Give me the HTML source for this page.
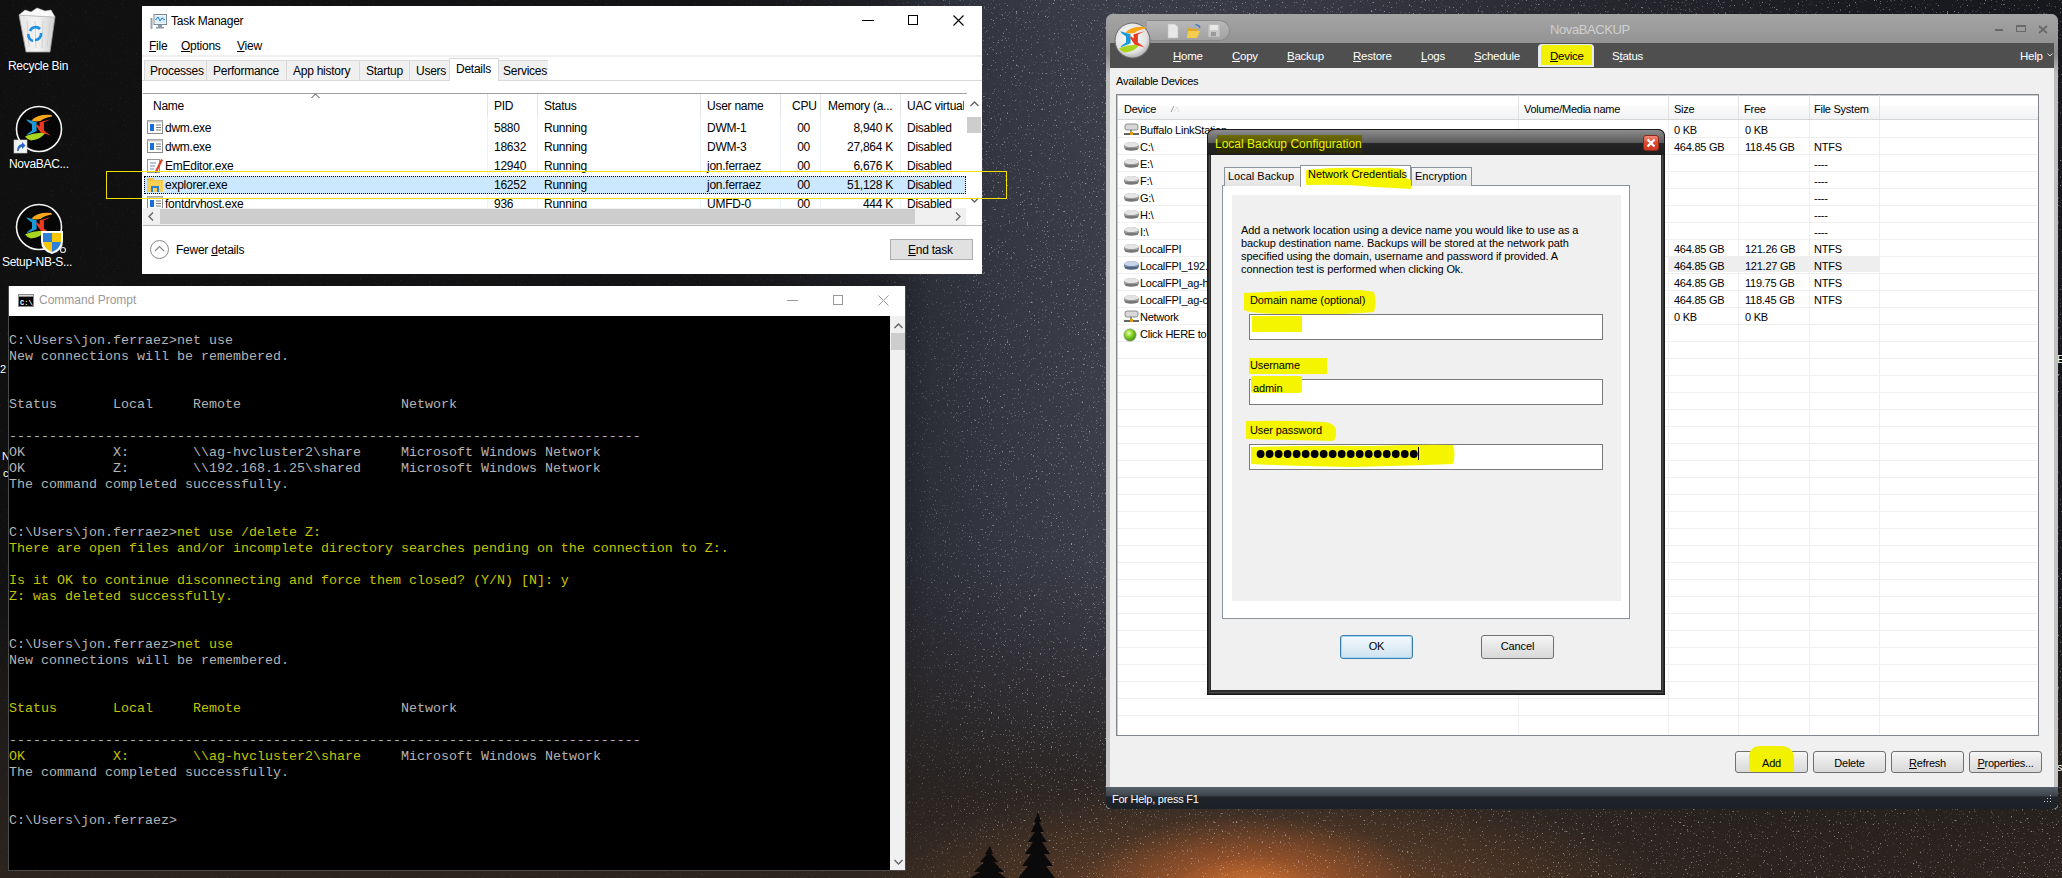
<!DOCTYPE html>
<html><head><meta charset="utf-8">
<style>
*{margin:0;padding:0;box-sizing:border-box}
html,body{width:2062px;height:878px;overflow:hidden}
body{position:relative;font-family:"Liberation Sans",sans-serif;background:#111113;
background:
 radial-gradient(ellipse 170px 75px at 1250px 890px, rgba(230,125,50,.85), rgba(200,100,45,.45) 45%, rgba(150,80,40,0) 100%),
 radial-gradient(ellipse 520px 150px at 1260px 900px, rgba(140,80,42,.9), rgba(100,65,40,.55) 45%, rgba(60,45,38,.15) 80%, rgba(40,34,32,0) 100%),
 linear-gradient(180deg, rgba(34,30,28,0) 0px, rgba(34,30,28,0) 560px, rgba(40,34,30,.85) 790px, rgba(44,36,30,1) 878px),
 linear-gradient(90deg,#101011 0px,#131315 700px,#1e1f24 880px,#2c2e38 930px,#343642 1000px,#3b3d49 1100px,#353641 1350px,#26262d 1600px,#1a1b20 1850px,#16181c 2062px);
}
.abs{position:absolute}
.ls{font-family:"Liberation Sans",sans-serif}
.lm{font-family:"Liberation Mono",monospace}
.t{position:absolute;white-space:pre;line-height:1}
/* desktop icon labels */
.tab{background:#f0f0f0;border:1px solid #d9d9d9;border-right:none}
.cl{position:absolute;left:0px;white-space:pre;height:16px}
.nbtn{background:linear-gradient(#f6f6f6,#e6e6e6 50%,#d9d9d9);border:1px solid #707070;border-radius:3px}
.ps{letter-spacing:-0.1px}
#nova .t{letter-spacing:-0.25px}
.dlab{position:absolute;color:#fff;font-size:12px;white-space:pre;text-shadow:0 0 2px #000;letter-spacing:-0.3px;line-height:1}
</style></head><body>

<svg class="abs" style="left:0;top:0;opacity:.5" width="2062" height="878">
 <defs>
  <filter id="nz" x="0" y="0" width="100%" height="100%"><feTurbulence type="fractalNoise" baseFrequency="0.55" numOctaves="2" seed="7"/><feColorMatrix values="0 0 0 0 .8  0 0 0 0 .8  0 0 0 0 .9  6 0 0 0 -3.95"/><feGaussianBlur stdDeviation="0.45"/></filter>
  <linearGradient id="nzm" x1="0" x2="1"><stop offset="0" stop-color="#fff" stop-opacity=".12"/><stop offset=".42" stop-color="#fff" stop-opacity=".18"/><stop offset=".48" stop-color="#fff" stop-opacity="1"/><stop offset="1" stop-color="#fff" stop-opacity="1"/></linearGradient>
  <mask id="nzk"><rect width="2062" height="878" fill="url(#nzm)"/></mask>
 </defs>
 <rect width="2062" height="878" filter="url(#nz)" mask="url(#nzk)"/>
</svg>
<!-- ============ DESKTOP ICONS ============ -->
<div id="desk">
  <!-- recycle bin -->
  <svg class="abs" style="left:17px;top:7px" width="42" height="46" viewBox="0 0 42 46">
    <defs><linearGradient id="rbg" x1="0" x2="1"><stop offset="0" stop-color="#e6e6e6"/><stop offset=".5" stop-color="#f4f4f4"/><stop offset="1" stop-color="#cfcfcf"/></linearGradient></defs>
    <path d="M2 8 L38 10 L33 45 L9 45 Z" fill="url(#rbg)" stroke="#9a9a9a" stroke-width=".8"/>
    <path d="M2 8 L8 3 L14 5 L20 1 L28 4 L34 3 L38 10 Z" fill="#fafafa" stroke="#c8c8c8" stroke-width=".6"/>
    <path d="M10 14 L12 40 M18 14 L19 41 M26 14 L25 41 M33 14 L30 40" stroke="#d2d2d2" stroke-width="1"/>
    <path d="M13 24 A6 6 0 0 1 23 22" fill="none" stroke="#1a8fe6" stroke-width="2.6"/>
    <path d="M24 26 A6 6 0 0 1 18 33" fill="none" stroke="#1a8fe6" stroke-width="2.6"/>
    <path d="M16 34 A6 6 0 0 1 11.5 27" fill="none" stroke="#1a8fe6" stroke-width="2.6"/>
  </svg>
  <div class="dlab" style="left:8px;top:60px">Recycle Bin</div>
  <!-- nova icon -->
  <svg width="0" height="0" style="position:absolute"><defs>
   <symbol id="nlogo" viewBox="0 0 36 36">
    <path d="M10.5 9.5 Q16 3 30.5 4 L31 5.5 Q23 6.5 19.5 10 Q14 11 10.5 9.5Z" fill="#f7a61a"/>
    <path d="M4 25.5 Q10 22 24.5 21.5 Q21 28 10 29.5 Q6 28.5 4 25.5Z" fill="#a9d51f"/>
    <path d="M5.3 8.2 L15.6 11.3 L15.6 20.2 L5.3 24.6 L6.8 22.4 L11 19.6 L11 13.6 L6.8 10.4 Z" fill="#1a9ad8"/>
    <path d="M29.7 8.2 L22.9 11.6 L22.9 19.4 L29.7 24.6 L19.6 21.4 L15 14.8 L16 13.2 L18.6 15.6 L18.6 11.3 Z" fill="#ec3a22"/>
   </symbol></defs></svg>
  <svg class="abs" style="left:13px;top:104px" width="52" height="52" viewBox="0 0 52 52">
    <circle cx="26" cy="25" r="22.5" fill="#050505" stroke="#f4f4f4" stroke-width="1.6"/>
    <use href="#nlogo" x="7" y="7" width="38" height="36"/>
    <rect x="1" y="36" width="13" height="13" fill="#f2f2f2" stroke="#cfcfcf" stroke-width=".6"/>
    <path d="M4 47 Q4 41 9 40 L9 38 L12.5 41.5 L9 45 L9 43 Q6.5 43 5.5 47Z" fill="#2a66c8"/>
  </svg>
  <div class="dlab" style="left:9px;top:158px">NovaBAC...</div>
  <svg class="abs" style="left:13px;top:202px" width="56" height="56" viewBox="0 0 56 56">
    <circle cx="26" cy="25" r="22.5" fill="#050505" stroke="#f4f4f4" stroke-width="1.6"/>
    <use href="#nlogo" x="7" y="7" width="38" height="36"/>
    <path d="M28 29 L50 29 L50 39 Q50 49 39 52 Q28 49 28 39Z" fill="#fff"/>
    <path d="M30 31 L39 31 L39 40 L30 40Z" fill="#2f7fd6"/>
    <path d="M39 31 L48 31 L48 40 L39 40Z" fill="#f6c700"/>
    <path d="M30 40 L39 40 L39 50 Q31 47 30 40Z" fill="#f6c700"/>
    <path d="M39 40 L48 40 Q47 47 39 50Z" fill="#2f7fd6"/>
    <circle cx="50" cy="48" r="2.5" fill="none" stroke="#ddd" stroke-width="1.2"/>
  </svg>
  <div class="dlab" style="font-size:11px;left:0px;top:364px">2</div>
  <div class="dlab" style="font-size:11px;left:2px;top:451px">N</div>
  <div class="dlab" style="font-size:11px;left:3px;top:468px">c</div>
  <div class="dlab" style="left:2px;top:256px">Setup-NB-S...</div>
</div>

<svg class="abs" style="left:960px;top:812px" width="110" height="66" viewBox="0 0 110 66">
 <path fill="#0a0a0a" d="M78 0 L81 10 L79 10 L84 20 L80 20 L87 30 L82 30 L90 42 L84 42 L93 54 L86 54 L95 66 L58 66 L68 54 L62 54 L71 42 L65 42 L73 30 L68 30 L75 20 L71 20 L76 10 L74 10 Z"/>
 <path fill="#0a0a0a" d="M30 34 L33 42 L31 42 L38 50 L34 50 L44 60 L38 60 L46 66 L10 66 L20 60 L14 60 L24 50 L20 50 L27 42 L25 42 Z"/>
</svg>
<div class="dlab" style="font-size:11px;left:2057px;top:354px">E</div>
<div class="dlab" style="font-size:11px;left:2057px;top:762px">s</div>
<!-- TASK MANAGER -->
<div id="tm" class="abs" style="left:142px;top:6px;width:840px;height:268px;background:#fff;overflow:hidden;font-size:12px;color:#000;letter-spacing:-0.25px">
  <!-- title icon -->
  <svg class="abs" style="left:8px;top:8px" width="17" height="15" viewBox="0 0 17 15">
    <rect x="4" y="0.5" width="12.5" height="10" fill="#fff" stroke="#7a8a99"/>
    <rect x="5" y="1.5" width="10.5" height="8" fill="#d9ecfa"/>
    <path d="M5.5 6 L8 3 L10 7 L12 4 L15 6" fill="none" stroke="#1a7fd4" stroke-width="1"/>
    <rect x="8" y="11" width="4" height="2" fill="#8a9aa8"/>
    <rect x="6" y="13" width="8" height="1.5" fill="#8a9aa8"/>
    <rect x="0.5" y="4" width="2" height="11" fill="#9aa5ae"/>
    <rect x="0.8" y="4" width="1.2" height="1.2" fill="#3c3"/>
  </svg>
  <div class="t" style="left:29px;top:9px">Task Manager</div>
  <!-- title buttons -->
  <div class="abs" style="left:720px;top:14px;width:12px;height:1px;background:#000"></div>
  <div class="abs" style="left:766px;top:9px;width:10px;height:10px;border:1px solid #000"></div>
  <svg class="abs" style="left:811px;top:9px" width="11" height="11" viewBox="0 0 11 11"><path d="M0.5 0.5 L10.5 10.5 M10.5 0.5 L0.5 10.5" stroke="#000" stroke-width="1.1"/></svg>
  <!-- menu -->
  <div class="t" style="left:7px;top:34px"><u>F</u>ile</div>
  <div class="t" style="left:39px;top:34px"><u>O</u>ptions</div>
  <div class="t" style="left:95px;top:34px"><u>V</u>iew</div>
  <div class="abs" style="left:0;top:49px;width:840px;height:2px;background:#f0f0f0"></div>
  <!-- tabs -->
  <div class="abs" style="left:0;top:74px;width:840px;height:1px;background:#d9d9d9"></div>
  <div class="abs tab" style="left:2px;top:54px;width:62px;height:21px"></div>
  <div class="abs tab" style="left:64px;top:54px;width:80px;height:21px"></div>
  <div class="abs tab" style="left:144px;top:54px;width:73px;height:21px"></div>
  <div class="abs tab" style="left:217px;top:54px;width:50px;height:21px"></div>
  <div class="abs tab" style="left:267px;top:54px;width:40px;height:21px"></div>
  <div class="abs" style="left:307px;top:52px;width:50px;height:23px;background:#fff;border:1px solid #d9d9d9;border-bottom:none"></div>
  <div class="abs tab" style="left:356px;top:54px;width:50px;height:21px"></div>
  <div class="t" style="left:8px;top:59px">Processes</div>
  <div class="t" style="left:71px;top:59px">Performance</div>
  <div class="t" style="left:151px;top:59px">App history</div>
  <div class="t" style="left:224px;top:59px">Startup</div>
  <div class="t" style="left:274px;top:59px">Users</div>
  <div class="t" style="left:314px;top:57px">Details</div>
  <div class="t" style="left:361px;top:59px">Services</div>
  <!-- header -->
  <div class="abs" style="left:1px;top:87px;width:824px;height:1px;background:#a0a0a0"></div>
  <svg class="abs" style="left:169px;top:87px" width="9" height="6" viewBox="0 0 9 6"><path d="M0.5 5 L4.5 1 L8.5 5" fill="none" stroke="#444" stroke-width="1"/></svg>
  <div class="abs" style="left:345px;top:88px;width:1px;height:23px;background:#e5e5e5"></div>
  <div class="abs" style="left:395px;top:88px;width:1px;height:23px;background:#e5e5e5"></div>
  <div class="abs" style="left:558px;top:88px;width:1px;height:23px;background:#e5e5e5"></div>
  <div class="abs" style="left:638px;top:88px;width:1px;height:23px;background:#e5e5e5"></div>
  <div class="abs" style="left:678px;top:88px;width:1px;height:23px;background:#e5e5e5"></div>
  <div class="abs" style="left:758px;top:88px;width:1px;height:23px;background:#e5e5e5"></div>
  <div class="t" style="left:11px;top:94px">Name</div>
  <div class="t" style="left:352px;top:94px">PID</div>
  <div class="t" style="left:402px;top:94px">Status</div>
  <div class="t" style="left:565px;top:94px">User name</div>
  <div class="t" style="left:650px;top:94px">CPU</div>
  <div class="t" style="left:686px;top:94px">Memory (a...</div>
  <div class="t" style="left:765px;top:94px;width:57px;overflow:hidden">UAC virtualization</div>
  <!-- body col lines -->
  <div class="abs" style="left:345px;top:111px;width:1px;height:91px;background:#eaf2fa"></div>
  <div class="abs" style="left:395px;top:111px;width:1px;height:91px;background:#eaf2fa"></div>
  <div class="abs" style="left:558px;top:111px;width:1px;height:91px;background:#eaf2fa"></div>
  <div class="abs" style="left:638px;top:111px;width:1px;height:91px;background:#eaf2fa"></div>
  <div class="abs" style="left:678px;top:111px;width:1px;height:91px;background:#eaf2fa"></div>
  <div class="abs" style="left:758px;top:111px;width:1px;height:91px;background:#eaf2fa"></div>
  <!-- selected row -->
  <div class="abs" style="left:2px;top:170px;width:822px;height:18px;background:#cce8ff;border:1px dotted #000"></div>
  <div class="abs" style="left:0;top:0;width:824px;height:202px;overflow:hidden"><svg class="abs" style="left:5px;top:114px" width="16" height="14" viewBox="0 0 16 14"><rect x="0.5" y="0.5" width="15" height="13" fill="#fff" stroke="#8a8a8a"/><rect x="0.5" y="0.5" width="15" height="2" fill="#c8c8c8"/><rect x="3" y="4" width="4" height="7" fill="#1670d8"/><path d="M9 5h5M9 7.5h5M9 10h5" stroke="#7a7a7a"/></svg>
<div class="t" style="left:23px;top:116px">dwm.exe</div>
<div class="t" style="left:352px;top:116px">5880</div>
<div class="t" style="left:402px;top:116px">Running</div>
<div class="t" style="left:565px;top:116px">DWM-1</div>
<div class="t" style="left:618px;top:116px;width:50px;text-align:right">00</div>
<div class="t" style="left:680px;top:116px;width:71px;text-align:right">8,940 K</div>
<div class="t" style="left:765px;top:116px">Disabled</div>
<svg class="abs" style="left:5px;top:133px" width="16" height="14" viewBox="0 0 16 14"><rect x="0.5" y="0.5" width="15" height="13" fill="#fff" stroke="#8a8a8a"/><rect x="0.5" y="0.5" width="15" height="2" fill="#c8c8c8"/><rect x="3" y="4" width="4" height="7" fill="#1670d8"/><path d="M9 5h5M9 7.5h5M9 10h5" stroke="#7a7a7a"/></svg>
<div class="t" style="left:23px;top:135px">dwm.exe</div>
<div class="t" style="left:352px;top:135px">18632</div>
<div class="t" style="left:402px;top:135px">Running</div>
<div class="t" style="left:565px;top:135px">DWM-3</div>
<div class="t" style="left:618px;top:135px;width:50px;text-align:right">00</div>
<div class="t" style="left:680px;top:135px;width:71px;text-align:right">27,864 K</div>
<div class="t" style="left:765px;top:135px">Disabled</div>
<svg class="abs" style="left:5px;top:152px" width="16" height="16" viewBox="0 0 16 16"><rect x="0.5" y="1.5" width="12" height="13" fill="#fff" stroke="#9a9a9a"/><path d="M3 5h6M3 8h5M3 11h4" stroke="#6a8aba"/><path d="M8 13 L14 1 L16 2 L10 14Z" fill="#e04020"/><path d="M8 13 L10 14 L8 15Z" fill="#333"/></svg>
<div class="t" style="left:23px;top:154px">EmEditor.exe</div>
<div class="t" style="left:352px;top:154px">12940</div>
<div class="t" style="left:402px;top:154px">Running</div>
<div class="t" style="left:565px;top:154px">jon.ferraez</div>
<div class="t" style="left:618px;top:154px;width:50px;text-align:right">00</div>
<div class="t" style="left:680px;top:154px;width:71px;text-align:right">6,676 K</div>
<div class="t" style="left:765px;top:154px">Disabled</div>
<svg class="abs" style="left:5px;top:171px" width="16" height="15" viewBox="0 0 16 15"><path d="M0 1h6l1 2h9v12H0Z" fill="#f0c040"/><rect x="0" y="4" width="16" height="11" fill="#f7cf52"/><rect x="4" y="9" width="8" height="6" fill="#2d7fd3"/><rect x="6" y="11" width="4" height="4" fill="#f7cf52"/></svg>
<div class="t" style="left:23px;top:173px">explorer.exe</div>
<div class="t" style="left:352px;top:173px">16252</div>
<div class="t" style="left:402px;top:173px">Running</div>
<div class="t" style="left:565px;top:173px">jon.ferraez</div>
<div class="t" style="left:618px;top:173px;width:50px;text-align:right">00</div>
<div class="t" style="left:680px;top:173px;width:71px;text-align:right">51,128 K</div>
<div class="t" style="left:765px;top:173px">Disabled</div>
<svg class="abs" style="left:5px;top:190px" width="16" height="14" viewBox="0 0 16 14"><rect x="0.5" y="0.5" width="15" height="13" fill="#fff" stroke="#8a8a8a"/><rect x="0.5" y="0.5" width="15" height="2" fill="#c8c8c8"/><rect x="3" y="4" width="4" height="7" fill="#1670d8"/><path d="M9 5h5M9 7.5h5M9 10h5" stroke="#7a7a7a"/></svg>
<div class="t" style="left:23px;top:192px">fontdrvhost.exe</div>
<div class="t" style="left:352px;top:192px">936</div>
<div class="t" style="left:402px;top:192px">Running</div>
<div class="t" style="left:565px;top:192px">UMFD-0</div>
<div class="t" style="left:618px;top:192px;width:50px;text-align:right">00</div>
<div class="t" style="left:680px;top:192px;width:71px;text-align:right">444 K</div>
<div class="t" style="left:765px;top:192px">Disabled</div></div>
  <!-- vertical scrollbar -->
  <div class="abs" style="left:824px;top:88px;width:16px;height:114px;background:#fff"></div>
  <svg class="abs" style="left:828px;top:95px" width="9" height="6" viewBox="0 0 9 6"><path d="M0.5 5 L4.5 1 L8.5 5" fill="none" stroke="#606060" stroke-width="1.3"/></svg>
  <div class="abs" style="left:825px;top:111px;width:14px;height:16px;background:#cdcdcd"></div>
  <svg class="abs" style="left:828px;top:191px" width="9" height="6" viewBox="0 0 9 6"><path d="M0.5 1 L4.5 5 L8.5 1" fill="none" stroke="#606060" stroke-width="1.3"/></svg>
  <!-- horizontal scrollbar -->
  <div class="abs" style="left:1px;top:202px;width:823px;height:17px;background:#f0f0f0"></div>
  <div class="abs" style="left:18px;top:203px;width:755px;height:15px;background:#cdcdcd"></div>
  <svg class="abs" style="left:6px;top:206px" width="6" height="9" viewBox="0 0 6 9"><path d="M5 0.5 L1 4.5 L5 8.5" fill="none" stroke="#606060" stroke-width="1.3"/></svg>
  <svg class="abs" style="left:813px;top:206px" width="6" height="9" viewBox="0 0 6 9"><path d="M1 0.5 L5 4.5 L1 8.5" fill="none" stroke="#606060" stroke-width="1.3"/></svg>
  <div class="abs" style="left:1px;top:219px;width:839px;height:1px;background:#bcbcbc"></div>
  <!-- footer -->
  <div class="abs" style="left:8px;top:234px;width:19px;height:19px;border:1px solid #888;border-radius:50%"></div>
  <svg class="abs" style="left:12px;top:239px" width="11" height="7" viewBox="0 0 11 7"><path d="M1 6 L5.5 1.5 L10 6" fill="none" stroke="#888" stroke-width="1.2"/></svg>
  <div class="t" style="left:34px;top:238px">Fewer <u>d</u>etails</div>
  <div class="abs" style="left:748px;top:233px;width:83px;height:21px;background:#e1e1e1;border:1px solid #adadad"></div>
  <div class="t" style="left:766px;top:238px"><u>E</u>nd task</div>
</div>
<!-- yellow annotation -->
<div class="abs" style="left:106px;top:171px;width:901px;height:28px;border:1.5px solid #f2e200"></div>


<!-- CMD -->
<div id="cmd" class="abs" style="left:8px;top:286px;width:898px;height:585px;background:#000;border:1px solid #4a4a4a;border-top:none;overflow:hidden">
  <div class="abs" style="left:0;top:0;width:898px;height:30px;background:#fff"></div>
  <svg class="abs" style="left:9px;top:8px" width="16" height="13" viewBox="0 0 16 13">
    <rect x="0" y="0" width="16" height="13" fill="#8a8a8a"/><rect x="1" y="3" width="14" height="9" fill="#000"/>
    <rect x="1" y="1" width="14" height="1" fill="#d8d8d8"/>
    <text x="2" y="10.5" font-family="Liberation Mono" font-size="7" fill="#fff" font-weight="bold">C:\_</text>
  </svg>
  <div class="t" style="left:30px;top:8px;font-size:12px;color:#999">Command Prompt</div>
  <div class="abs" style="left:778px;top:14px;width:11px;height:1px;background:#999"></div>
  <div class="abs" style="left:824px;top:9px;width:10px;height:10px;border:1px solid #999"></div>
  <svg class="abs" style="left:869px;top:9px" width="11" height="11" viewBox="0 0 11 11"><path d="M0.5 0.5 L10.5 10.5 M10.5 0.5 L0.5 10.5" stroke="#999" stroke-width="1"/></svg>
  <div class="abs lm" style="left:0px;top:0px;width:881px;height:584px;font-size:13.333px;line-height:16px">
<div class="cl" style="top:47px"><span style="color:#b4b4b4">C:\Users\jon.ferraez&gt;net use</span></div>
<div class="cl" style="top:63px"><span style="color:#b4b4b4">New connections will be remembered.</span></div>
<div class="cl" style="top:111px"><span style="color:#b4b4b4">Status       Local     Remote                    Network</span></div>
<div class="cl" style="top:143px"><span style="color:#b4b4b4">-------------------------------------------------------------------------------</span></div>
<div class="cl" style="top:159px"><span style="color:#b4b4b4">OK           X:        \\ag-hvcluster2\share     Microsoft Windows Network</span></div>
<div class="cl" style="top:175px"><span style="color:#b4b4b4">OK           Z:        \\192.168.1.25\shared     Microsoft Windows Network</span></div>
<div class="cl" style="top:191px"><span style="color:#b4b4b4">The command completed successfully.</span></div>
<div class="cl" style="top:239px"><span style="color:#b4b4b4">C:\Users\jon.ferraez&gt;</span><span style="color:#c4c400">net use /delete Z:</span></div>
<div class="cl" style="top:255px"><span style="color:#c4c400">There are open files and/or incomplete directory searches pending on the connection to Z:.</span></div>
<div class="cl" style="top:287px"><span style="color:#c4c400">Is it OK to continue disconnecting and force them closed? (Y/N) [N]: y</span></div>
<div class="cl" style="top:303px"><span style="color:#c4c400">Z: was deleted successfully.</span></div>
<div class="cl" style="top:351px"><span style="color:#b4b4b4">C:\Users\jon.ferraez&gt;</span><span style="color:#c4c400">net use</span></div>
<div class="cl" style="top:367px"><span style="color:#b4b4b4">New connections will be remembered.</span></div>
<div class="cl" style="top:415px"><span style="color:#c4c400">Status       Local     Remote                    </span><span style="color:#b4b4b4">Network</span></div>
<div class="cl" style="top:447px"><span style="color:#b4b4b4">-------------------------------------------------------------------------------</span></div>
<div class="cl" style="top:463px"><span style="color:#c4c400">OK           X:        \\ag-hvcluster2\share     </span><span style="color:#b4b4b4">Microsoft Windows Network</span></div>
<div class="cl" style="top:479px"><span style="color:#b4b4b4">The command completed successfully.</span></div>
<div class="cl" style="top:527px"><span style="color:#b4b4b4">C:\Users\jon.ferraez&gt;</span></div>
  </div>
  <div class="abs" style="left:881px;top:30px;width:16px;height:554px;background:#f0f0f0"></div>
  <svg class="abs" style="left:885px;top:37px" width="9" height="6" viewBox="0 0 9 6"><path d="M0.5 5 L4.5 1 L8.5 5" fill="none" stroke="#606060" stroke-width="1.3"/></svg>
  <div class="abs" style="left:882px;top:47px;width:14px;height:17px;background:#cdcdcd"></div>
  <svg class="abs" style="left:885px;top:573px" width="9" height="6" viewBox="0 0 9 6"><path d="M0.5 1 L4.5 5 L8.5 1" fill="none" stroke="#606060" stroke-width="1.3"/></svg>
</div>


<!-- NOVA -->
<div id="nova" class="abs" style="left:1106px;top:14px;width:952px;height:795px;overflow:hidden;border-radius:7px 7px 4px 4px;font-size:12px">
<div class="abs" style="left:0;top:0;width:952px;height:795px;background:linear-gradient(#a6a6a6,#979797 25px,#8a8a8a 40px,#bdbdbd 60px,#c4c4c4)"></div>
<div class="abs" style="left:0;top:0;width:952px;height:29px;background:linear-gradient(#a4a4a4,#9c9c9c 50%,#939393)"></div>
<div class="abs" style="left:41px;top:6px;width:83px;height:21px;border-radius:0 11px 11px 0;background:linear-gradient(#b8b8b8,#a2a2a2);border:1px solid #8a8a8a;border-left:none"></div>
<svg class="abs" style="left:61px;top:9px" width="60" height="16" viewBox="0 0 60 16">
<path d="M1 1h7l3 3v11H1z" fill="#e8e8e8" stroke="#c0c0c0" stroke-width=".6"/>
<path d="M20 5h4l1 1h6v9H20z" fill="#e0a820"/><path d="M21 8h12l-3 7H20z" fill="#f4cc50"/>
<path d="M28 2 q4 -1 5 3" fill="none" stroke="#3a78c0" stroke-width="1.2"/>
<rect x="41" y="1" width="12" height="13" fill="#c8c8c8" stroke="#a8a8a8" stroke-width=".6"/><rect x="43" y="2" width="8" height="5" fill="#e8e8e8"/><rect x="44" y="9" width="5" height="4" fill="#9a9a9a"/>
</svg>

<div class="t" style="left:444px;top:9px;font-size:13px;color:#cfcfcf;letter-spacing:-0.4px">NovaBACKUP</div>
<div class="abs" style="left:889px;top:15px;width:8px;height:2px;background:#6a6a6a"></div>
<div class="abs" style="left:910px;top:11px;width:10px;height:7px;border:1px solid #6a6a6a;border-top-width:2px"></div>
<svg class="abs" style="left:932px;top:11px" width="10" height="9" viewBox="0 0 10 9"><path d="M1 1 L9 8 M9 1 L1 8" stroke="#6a6a6a" stroke-width="2"/></svg>
<div class="abs" style="left:4px;top:29px;width:944px;height:25px;background:#4f4f4f"></div>
<svg class="abs" style="left:8px;top:8px" width="38" height="38" viewBox="0 0 38 38">
<defs><radialGradient id="lg" cx="45%" cy="40%" r="60%"><stop offset="0" stop-color="#ffffff"/><stop offset=".75" stop-color="#e2e2e2"/><stop offset="1" stop-color="#b0b0b0"/></radialGradient></defs>
<circle cx="18.5" cy="18.5" r="17.5" fill="url(#lg)" stroke="#6a6a6a" stroke-width="1"/>
<use href="#nlogo" x="1" y="1" width="36" height="36"/>
</svg>
<div class="abs" style="left:432px;top:30px;width:56px;height:23px;border:1px solid #dfe8ef;border-bottom:none;border-radius:4px 4px 0 0;background:#e8eef3"></div>
<div class="abs" style="left:435px;top:31px;width:51px;height:20px;background:#f0f000;border-radius:3px 3px 0 0"></div>
<div class="t" style="left:67px;top:36.5px;font-size:11.5px;color:#fff"><u>H</u>ome</div>
<div class="t" style="left:126px;top:36.5px;font-size:11.5px;color:#fff"><u>C</u>opy</div>
<div class="t" style="left:181px;top:36.5px;font-size:11.5px;color:#fff"><u>B</u>ackup</div>
<div class="t" style="left:247px;top:36.5px;font-size:11.5px;color:#fff"><u>R</u>estore</div>
<div class="t" style="left:315px;top:36.5px;font-size:11.5px;color:#fff"><u>L</u>ogs</div>
<div class="t" style="left:368px;top:36.5px;font-size:11.5px;color:#fff"><u>S</u>chedule</div>
<div class="t" style="left:444px;top:36.5px;font-size:11.5px;color:#000"><u>D</u>evice</div>
<div class="t" style="left:506px;top:36.5px;font-size:11.5px;color:#fff">S<u>t</u>atus</div>
<div class="t" style="left:914px;top:36.5px;font-size:11.5px;color:#fff">Help</div>
<svg class="abs" style="left:941px;top:39px" width="6" height="4" viewBox="0 0 6 4"><path d="M0.5 0.5 L3 3 L5.5 0.5" fill="none" stroke="#ddd" stroke-width="1"/></svg>
<div class="abs" style="left:4px;top:54px;width:944px;height:719px;background:#f0f0f0"></div>
<div class="t" style="left:10px;top:62px;font-size:11px;color:#000">Available Devices</div>
<div class="abs" style="left:10px;top:80px;width:923px;height:642px;background:#fff;border:1px solid #80868c;box-shadow:inset 1px 1px 0 #c9c9c9"></div>
<div class="abs" style="left:12px;top:92px;width:920px;height:13px;background:linear-gradient(#fbfbfb,#f1f2f4)"></div>
<div class="abs" style="left:12px;top:105px;width:920px;height:1px;background:#d5d5d5"></div>
<div class="abs" style="left:412px;top:81px;width:1px;height:24px;background:#e3e3e3"></div>
<div class="abs" style="left:412px;top:106px;width:1px;height:615px;background:#efefef"></div>
<div class="abs" style="left:562px;top:81px;width:1px;height:24px;background:#e3e3e3"></div>
<div class="abs" style="left:562px;top:106px;width:1px;height:615px;background:#efefef"></div>
<div class="abs" style="left:632px;top:81px;width:1px;height:24px;background:#e3e3e3"></div>
<div class="abs" style="left:632px;top:106px;width:1px;height:615px;background:#efefef"></div>
<div class="abs" style="left:703px;top:81px;width:1px;height:24px;background:#e3e3e3"></div>
<div class="abs" style="left:703px;top:106px;width:1px;height:615px;background:#efefef"></div>
<div class="abs" style="left:773px;top:81px;width:1px;height:24px;background:#e3e3e3"></div>
<div class="abs" style="left:773px;top:106px;width:1px;height:615px;background:#efefef"></div>
<div class="t" style="left:18px;top:90px;font-size:11px">Device</div>
<div class="t" style="left:418px;top:90px;font-size:11px">Volume/Media name</div>
<div class="t" style="left:568px;top:90px;font-size:11px">Size</div>
<div class="t" style="left:638px;top:90px;font-size:11px">Free</div>
<div class="t" style="left:708px;top:90px;font-size:11px">File System</div>
<svg class="abs" style="left:64px;top:91px" width="10" height="8" viewBox="0 0 10 8"><path d="M1 7 L4 1" stroke="#999" stroke-width="1"/><path d="M4 7 L7 2 L9 7" fill="none" stroke="#e0e0e0"/></svg>
<div class="abs" style="left:12px;top:123px;width:920px;height:1px;background:#efefef"></div>
<div class="abs" style="left:12px;top:140px;width:920px;height:1px;background:#efefef"></div>
<div class="abs" style="left:12px;top:157px;width:920px;height:1px;background:#efefef"></div>
<div class="abs" style="left:12px;top:174px;width:920px;height:1px;background:#efefef"></div>
<div class="abs" style="left:12px;top:191px;width:920px;height:1px;background:#efefef"></div>
<div class="abs" style="left:12px;top:208px;width:920px;height:1px;background:#efefef"></div>
<div class="abs" style="left:12px;top:225px;width:920px;height:1px;background:#efefef"></div>
<div class="abs" style="left:12px;top:242px;width:920px;height:1px;background:#efefef"></div>
<div class="abs" style="left:12px;top:259px;width:920px;height:1px;background:#efefef"></div>
<div class="abs" style="left:12px;top:276px;width:920px;height:1px;background:#efefef"></div>
<div class="abs" style="left:12px;top:293px;width:920px;height:1px;background:#efefef"></div>
<div class="abs" style="left:12px;top:310px;width:920px;height:1px;background:#efefef"></div>
<div class="abs" style="left:12px;top:327px;width:920px;height:1px;background:#efefef"></div>
<div class="abs" style="left:12px;top:344px;width:920px;height:1px;background:#efefef"></div>
<div class="abs" style="left:12px;top:361px;width:920px;height:1px;background:#efefef"></div>
<div class="abs" style="left:12px;top:378px;width:920px;height:1px;background:#efefef"></div>
<div class="abs" style="left:12px;top:395px;width:920px;height:1px;background:#efefef"></div>
<div class="abs" style="left:12px;top:412px;width:920px;height:1px;background:#efefef"></div>
<div class="abs" style="left:12px;top:429px;width:920px;height:1px;background:#efefef"></div>
<div class="abs" style="left:12px;top:446px;width:920px;height:1px;background:#efefef"></div>
<div class="abs" style="left:12px;top:463px;width:920px;height:1px;background:#efefef"></div>
<div class="abs" style="left:12px;top:480px;width:920px;height:1px;background:#efefef"></div>
<div class="abs" style="left:12px;top:497px;width:920px;height:1px;background:#efefef"></div>
<div class="abs" style="left:12px;top:514px;width:920px;height:1px;background:#efefef"></div>
<div class="abs" style="left:12px;top:531px;width:920px;height:1px;background:#efefef"></div>
<div class="abs" style="left:12px;top:548px;width:920px;height:1px;background:#efefef"></div>
<div class="abs" style="left:12px;top:565px;width:920px;height:1px;background:#efefef"></div>
<div class="abs" style="left:12px;top:582px;width:920px;height:1px;background:#efefef"></div>
<div class="abs" style="left:12px;top:599px;width:920px;height:1px;background:#efefef"></div>
<div class="abs" style="left:12px;top:616px;width:920px;height:1px;background:#efefef"></div>
<div class="abs" style="left:12px;top:633px;width:920px;height:1px;background:#efefef"></div>
<div class="abs" style="left:12px;top:650px;width:920px;height:1px;background:#efefef"></div>
<div class="abs" style="left:12px;top:667px;width:920px;height:1px;background:#efefef"></div>
<div class="abs" style="left:12px;top:684px;width:920px;height:1px;background:#efefef"></div>
<div class="abs" style="left:12px;top:701px;width:920px;height:1px;background:#efefef"></div>
<div class="abs" style="left:562px;top:242px;width:211px;height:16px;background:#eeeeee"></div>
<svg class="abs" style="left:17px;top:109px" width="17" height="14" viewBox="0 0 17 14"><rect x="2" y="1" width="13" height="6" rx="2" fill="#d8d8d8" stroke="#777" stroke-width=".8"/><path d="M8 7v4" stroke="#333"/><path d="M1 11h15" stroke="#333" stroke-width="1.5"/><rect x="7" y="9" width="3" height="3" fill="#e8a000"/></svg>
<div class="t" style="left:34px;top:111px;font-size:11px;width:370px;overflow:hidden">Buffalo LinkStation</div>
<div class="t" style="left:568px;top:111px;font-size:11px">0 KB</div>
<div class="t" style="left:639px;top:111px;font-size:11px">0 KB</div>
<svg class="abs" style="left:17px;top:127px" width="17" height="11" viewBox="0 0 17 11"><path d="M1 4 Q3 1 8 1 Q14 1 16 4 L16 7 Q14 10 8 10 Q3 10 1 7Z" fill="#9a9a9a"/><path d="M1 4 Q3 1 8 1 Q14 1 16 4 Q14 6 8 6 Q3 6 1 4Z" fill="#e4e4e4"/><path d="M2 8 L15 8" stroke="#555" stroke-width="1"/></svg>
<div class="t" style="left:34px;top:128px;font-size:11px;width:370px;overflow:hidden">C:\</div>
<div class="t" style="left:568px;top:128px;font-size:11px">464.85 GB</div>
<div class="t" style="left:639px;top:128px;font-size:11px">118.45 GB</div>
<div class="t" style="left:708px;top:128px;font-size:11px">NTFS</div>
<svg class="abs" style="left:17px;top:144px" width="17" height="11" viewBox="0 0 17 11"><path d="M1 4 Q3 1 8 1 Q14 1 16 4 L16 7 Q14 10 8 10 Q3 10 1 7Z" fill="#9a9a9a"/><path d="M1 4 Q3 1 8 1 Q14 1 16 4 Q14 6 8 6 Q3 6 1 4Z" fill="#e4e4e4"/><path d="M2 8 L15 8" stroke="#555" stroke-width="1"/></svg>
<div class="t" style="left:34px;top:145px;font-size:11px;width:370px;overflow:hidden">E:\</div>
<div class="t" style="left:708px;top:145px;font-size:11px">----</div>
<svg class="abs" style="left:17px;top:161px" width="17" height="11" viewBox="0 0 17 11"><path d="M1 4 Q3 1 8 1 Q14 1 16 4 L16 7 Q14 10 8 10 Q3 10 1 7Z" fill="#9a9a9a"/><path d="M1 4 Q3 1 8 1 Q14 1 16 4 Q14 6 8 6 Q3 6 1 4Z" fill="#e4e4e4"/><path d="M2 8 L15 8" stroke="#555" stroke-width="1"/></svg>
<div class="t" style="left:34px;top:162px;font-size:11px;width:370px;overflow:hidden">F:\</div>
<div class="t" style="left:708px;top:162px;font-size:11px">----</div>
<svg class="abs" style="left:17px;top:178px" width="17" height="11" viewBox="0 0 17 11"><path d="M1 4 Q3 1 8 1 Q14 1 16 4 L16 7 Q14 10 8 10 Q3 10 1 7Z" fill="#9a9a9a"/><path d="M1 4 Q3 1 8 1 Q14 1 16 4 Q14 6 8 6 Q3 6 1 4Z" fill="#e4e4e4"/><path d="M2 8 L15 8" stroke="#555" stroke-width="1"/></svg>
<div class="t" style="left:34px;top:179px;font-size:11px;width:370px;overflow:hidden">G:\</div>
<div class="t" style="left:708px;top:179px;font-size:11px">----</div>
<svg class="abs" style="left:17px;top:195px" width="17" height="11" viewBox="0 0 17 11"><path d="M1 4 Q3 1 8 1 Q14 1 16 4 L16 7 Q14 10 8 10 Q3 10 1 7Z" fill="#9a9a9a"/><path d="M1 4 Q3 1 8 1 Q14 1 16 4 Q14 6 8 6 Q3 6 1 4Z" fill="#e4e4e4"/><path d="M2 8 L15 8" stroke="#555" stroke-width="1"/></svg>
<div class="t" style="left:34px;top:196px;font-size:11px;width:370px;overflow:hidden">H:\</div>
<div class="t" style="left:708px;top:196px;font-size:11px">----</div>
<svg class="abs" style="left:17px;top:212px" width="17" height="11" viewBox="0 0 17 11"><path d="M1 4 Q3 1 8 1 Q14 1 16 4 L16 7 Q14 10 8 10 Q3 10 1 7Z" fill="#9a9a9a"/><path d="M1 4 Q3 1 8 1 Q14 1 16 4 Q14 6 8 6 Q3 6 1 4Z" fill="#e4e4e4"/><path d="M2 8 L15 8" stroke="#555" stroke-width="1"/></svg>
<div class="t" style="left:34px;top:213px;font-size:11px;width:370px;overflow:hidden">I:\</div>
<div class="t" style="left:708px;top:213px;font-size:11px">----</div>
<svg class="abs" style="left:17px;top:229px" width="17" height="11" viewBox="0 0 17 11"><path d="M1 4 Q3 1 8 1 Q14 1 16 4 L16 7 Q14 10 8 10 Q3 10 1 7Z" fill="#9a9a9a"/><path d="M1 4 Q3 1 8 1 Q14 1 16 4 Q14 6 8 6 Q3 6 1 4Z" fill="#e4e4e4"/><path d="M2 8 L15 8" stroke="#555" stroke-width="1"/></svg>
<div class="t" style="left:34px;top:230px;font-size:11px;width:370px;overflow:hidden">LocalFPI</div>
<div class="t" style="left:568px;top:230px;font-size:11px">464.85 GB</div>
<div class="t" style="left:639px;top:230px;font-size:11px">121.26 GB</div>
<div class="t" style="left:708px;top:230px;font-size:11px">NTFS</div>
<svg class="abs" style="left:17px;top:246px" width="17" height="11" viewBox="0 0 17 11"><path d="M1 4 Q3 1 8 1 Q14 1 16 4 L16 7 Q14 10 8 10 Q3 10 1 7Z" fill="#6f86a8"/><path d="M1 4 Q3 1 8 1 Q14 1 16 4 Q14 6 8 6 Q3 6 1 4Z" fill="#c8d4e8"/><path d="M2 8 L15 8" stroke="#345" stroke-width="1"/></svg>
<div class="t" style="left:34px;top:247px;font-size:11px;width:370px;overflow:hidden">LocalFPI_192.168.1.25</div>
<div class="t" style="left:568px;top:247px;font-size:11px">464.85 GB</div>
<div class="t" style="left:639px;top:247px;font-size:11px">121.27 GB</div>
<div class="t" style="left:708px;top:247px;font-size:11px">NTFS</div>
<svg class="abs" style="left:17px;top:263px" width="17" height="11" viewBox="0 0 17 11"><path d="M1 4 Q3 1 8 1 Q14 1 16 4 L16 7 Q14 10 8 10 Q3 10 1 7Z" fill="#9a9a9a"/><path d="M1 4 Q3 1 8 1 Q14 1 16 4 Q14 6 8 6 Q3 6 1 4Z" fill="#e4e4e4"/><path d="M2 8 L15 8" stroke="#555" stroke-width="1"/></svg>
<div class="t" style="left:34px;top:264px;font-size:11px;width:370px;overflow:hidden">LocalFPI_ag-hvcluster2</div>
<div class="t" style="left:568px;top:264px;font-size:11px">464.85 GB</div>
<div class="t" style="left:639px;top:264px;font-size:11px">119.75 GB</div>
<div class="t" style="left:708px;top:264px;font-size:11px">NTFS</div>
<svg class="abs" style="left:17px;top:280px" width="17" height="11" viewBox="0 0 17 11"><path d="M1 4 Q3 1 8 1 Q14 1 16 4 L16 7 Q14 10 8 10 Q3 10 1 7Z" fill="#9a9a9a"/><path d="M1 4 Q3 1 8 1 Q14 1 16 4 Q14 6 8 6 Q3 6 1 4Z" fill="#e4e4e4"/><path d="M2 8 L15 8" stroke="#555" stroke-width="1"/></svg>
<div class="t" style="left:34px;top:281px;font-size:11px;width:370px;overflow:hidden">LocalFPI_ag-cluster</div>
<div class="t" style="left:568px;top:281px;font-size:11px">464.85 GB</div>
<div class="t" style="left:639px;top:281px;font-size:11px">118.45 GB</div>
<div class="t" style="left:708px;top:281px;font-size:11px">NTFS</div>
<svg class="abs" style="left:17px;top:296px" width="17" height="14" viewBox="0 0 17 14"><rect x="2" y="1" width="13" height="6" rx="2" fill="#d8d8d8" stroke="#777" stroke-width=".8"/><path d="M8 7v4" stroke="#333"/><path d="M1 11h15" stroke="#333" stroke-width="1.5"/><rect x="7" y="9" width="3" height="3" fill="#e8a000"/></svg>
<div class="t" style="left:34px;top:298px;font-size:11px;width:370px;overflow:hidden">Network</div>
<div class="t" style="left:568px;top:298px;font-size:11px">0 KB</div>
<div class="t" style="left:639px;top:298px;font-size:11px">0 KB</div>
<svg class="abs" style="left:17px;top:314px" width="14" height="14" viewBox="0 0 14 14"><defs><radialGradient id="gd" cx="40%" cy="35%" r="60%"><stop offset="0" stop-color="#e6ffb0"/><stop offset=".5" stop-color="#8ad62a"/><stop offset="1" stop-color="#4a9a18"/></radialGradient></defs><circle cx="7" cy="7" r="6.2" fill="url(#gd)" stroke="#9a9a9a" stroke-width=".6"/></svg>
<div class="t" style="left:34px;top:315px;font-size:11px;width:370px;overflow:hidden">Click HERE to add a new device</div>
<div class="abs nbtn" style="left:629px;top:737px;width:73px;height:22px"></div>
<div class="abs nbtn" style="left:707px;top:737px;width:73px;height:22px"></div>
<div class="abs nbtn" style="left:785px;top:737px;width:73px;height:22px"></div>
<div class="abs nbtn" style="left:863px;top:737px;width:73px;height:22px"></div>
<div class="abs" style="left:643px;top:732px;width:45px;height:26px;background:#f2f200;border-radius:10px 12px 2px 4px"></div>
<div class="t" style="left:629px;top:744px;width:73px;text-align:center;font-size:11px">Add</div>
<div class="t" style="left:707px;top:744px;width:73px;text-align:center;font-size:11px">Delete</div>
<div class="t" style="left:785px;top:744px;width:73px;text-align:center;font-size:11px"><u>R</u>efresh</div>
<div class="t" style="left:863px;top:744px;width:73px;text-align:center;font-size:11px"><u>P</u>roperties...</div>
<div class="abs" style="left:0px;top:773px;width:952px;height:22px;background:linear-gradient(#59616a,#3c434b 40%,#20252b 45%,#1c2126);border-radius:0 0 5px 5px"></div>
<div class="t" style="left:6px;top:780px;font-size:11px;color:#fff">For Help, press F1</div>
<svg class="abs" style="left:936px;top:780px" width="10" height="10" viewBox="0 0 10 10"><path d="M8 1h1v1h-1zM5 4h1v1h-1zM8 4h1v1h-1zM2 7h1v1h-1zM5 7h1v1h-1zM8 7h1v1h-1z" fill="#ccc"/></svg>
</div>
<div id="dlg" class="abs" style="left:1207px;top:129px;width:458px;height:566px;font-size:11px;color:#000">
<div class="abs" style="left:0;top:0;width:458px;height:566px;background:#2c2c2c;border-radius:7px 7px 0 0;box-shadow:inset 0 0 0 1px #1a1a1a"></div>
<div class="abs" style="left:1px;top:1px;width:456px;height:13px;background:linear-gradient(#8c8c8c,#5a5a5a);border-radius:6px 6px 0 0"></div>
<div class="abs" style="left:1px;top:14px;width:456px;height:12px;background:linear-gradient(#262626,#1e1e1e)"></div>
<div class="abs" style="left:2px;top:26px;width:1px;height:536px;background:#4a4a4a"></div>
<div class="abs" style="left:455px;top:26px;width:1px;height:536px;background:#4a4a4a"></div>
<div class="abs" style="left:2px;top:563px;width:454px;height:1px;background:#4a4a4a"></div>
<div class="abs" style="left:4px;top:26px;width:450px;height:535px;background:#f0f0f0"></div>
<div class="abs" style="left:10px;top:6px;width:145px;height:18px;background:linear-gradient(#6e6c06,#5a5804 40%,#302f00 48%,#2a2900)"></div>
<div class="t" style="left:8px;top:9px;font-size:12px;color:#e8f400">Local Backup Configuration</div>
<div class="abs" style="left:436px;top:6px;width:16px;height:16px;border-radius:3px;background:linear-gradient(#f08a78,#e0462c 50%,#d03a22);border:1px solid #8a2a1a"></div>
<svg class="abs" style="left:439px;top:9px" width="10" height="10" viewBox="0 0 10 10"><path d="M1.5 1.5 L8.5 8.5 M8.5 1.5 L1.5 8.5" stroke="#fff" stroke-width="2.4"/></svg>
<div class="abs" style="left:15px;top:56px;width:408px;height:434px;background:#fff;border:1px solid #8c939b"></div>
<div class="abs" style="left:25px;top:66px;width:389px;height:406px;background:#f0f0f0"></div>
<div class="abs" style="left:17px;top:38px;width:77px;height:19px;background:linear-gradient(#f6f6f6,#e4e4e4);border:1px solid #8c939b;border-bottom:none"></div>
<div class="abs" style="left:204px;top:38px;width:61px;height:19px;background:linear-gradient(#f6f6f6,#e4e4e4);border:1px solid #8c939b;border-bottom:none"></div>
<div class="abs" style="left:93px;top:36px;width:111px;height:22px;background:#fff;border:1px solid #8c939b;border-bottom:none"></div>
<svg class="abs" style="left:97px;top:37px" width="110" height="24" viewBox="0 0 110 24"><path d="M2 4 Q30 1 60 2 Q85 1 100 3 L101 12 L107 14 L107 23 Q90 22 70 21 Q40 18 2 19 Z" fill="#f5f500"/></svg>
<div class="t" style="left:21px;top:42px">Local Backup</div>
<div class="t" style="left:101px;top:40px">Network Credentials</div>
<div class="t" style="left:208px;top:42px">Encryption</div>
<div class="t ps" style="left:34px;top:96px">Add a network location using a device name you would like to use as a</div>
<div class="t ps" style="left:34px;top:109px">backup destination name. Backups will be stored at the network path</div>
<div class="t ps" style="left:34px;top:122px">specified using the domain, username and password if provided. A</div>
<div class="t ps" style="left:34px;top:135px">connection test is performed when clicking Ok.</div>
<svg class="abs" style="left:36px;top:161px" width="134" height="26" viewBox="0 0 134 26"><path d="M1 3 Q40 1 75 0 Q120 -1 131 2 Q134 12 131 22 Q80 26 40 24 Q10 24 1 20 Z" fill="#f5f500"/></svg>
<div class="abs" style="left:42px;top:185px;width:354px;height:26px;background:#fff;border:1px solid #7a7a7a"></div>
<div class="abs" style="left:45px;top:187px;width:50px;height:16px;background:#f5f500"></div>
<div class="abs" style="left:42px;top:229px;width:78px;height:16px;background:#f5f500"></div>
<div class="abs" style="left:42px;top:250px;width:354px;height:26px;background:#fff;border:1px solid #7a7a7a"></div>
<div class="abs" style="left:44px;top:247px;width:51px;height:17px;background:#f5f500;border-radius:3px"></div>
<svg class="abs" style="left:37px;top:291px" width="94" height="22" viewBox="0 0 94 22"><path d="M2 1 Q40 0 80 2 Q92 3 92 12 Q92 21 88 21 Q40 20 2 19 Z" fill="#f5f500"/></svg>
<div class="abs" style="left:42px;top:315px;width:354px;height:26px;background:#fff;border:1px solid #7a7a7a"></div>
<svg class="abs" style="left:43px;top:315px" width="207" height="24" viewBox="0 0 207 24"><path d="M1 3 Q60 1 120 2 Q180 0 203 1 Q206 10 203 20 Q150 22 100 23 Q40 22 1 20 Z" fill="#f5f500"/></svg>
<div class="t ps" style="left:43px;top:166px">Domain name (optional)</div>
<div class="t ps" style="left:43px;top:231px">Username</div>
<div class="t ps" style="left:46px;top:254px">admin</div>
<div class="t ps" style="left:43px;top:296px">User password</div>
<svg class="abs" style="left:49px;top:320px" width="170" height="11" viewBox="0 0 170 11" fill="#000"><circle cx="4.60" cy="5" r="3.9"/><circle cx="13.61" cy="5" r="3.9"/><circle cx="22.62" cy="5" r="3.9"/><circle cx="31.63" cy="5" r="3.9"/><circle cx="40.64" cy="5" r="3.9"/><circle cx="49.65" cy="5" r="3.9"/><circle cx="58.66" cy="5" r="3.9"/><circle cx="67.67" cy="5" r="3.9"/><circle cx="76.68" cy="5" r="3.9"/><circle cx="85.69" cy="5" r="3.9"/><circle cx="94.70" cy="5" r="3.9"/><circle cx="103.71" cy="5" r="3.9"/><circle cx="112.72" cy="5" r="3.9"/><circle cx="121.73" cy="5" r="3.9"/><circle cx="130.74" cy="5" r="3.9"/><circle cx="139.75" cy="5" r="3.9"/><circle cx="148.76" cy="5" r="3.9"/><circle cx="157.77" cy="5" r="3.9"/></svg>
<div class="abs" style="left:211px;top:318px;width:1px;height:13px;background:#000"></div>
<div class="abs" style="left:133px;top:506px;width:73px;height:24px;border:1px solid #3c7fb1;border-radius:3px;background:linear-gradient(#f4f9fc,#e1eef7 50%,#cfe2ef);box-shadow:inset 0 0 0 1px #a6d6f0"></div>
<div class="abs nbtn" style="left:274px;top:506px;width:73px;height:24px"></div>
<div class="t ps" style="left:133px;top:512px;width:73px;text-align:center">OK</div>
<div class="t ps" style="left:274px;top:512px;width:73px;text-align:center">Cancel</div>
</div>

</body></html>
